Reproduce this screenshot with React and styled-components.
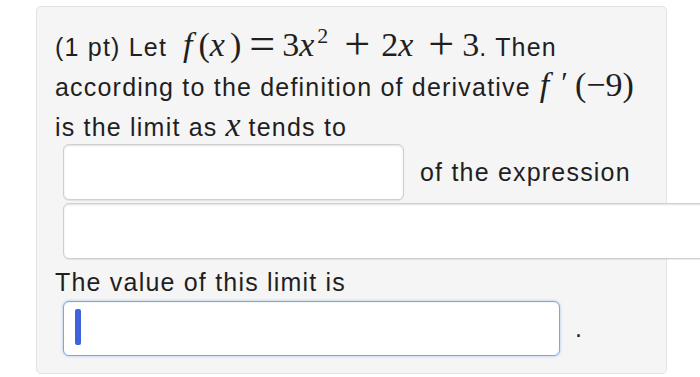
import React from 'react';
import styled, { createGlobalStyle } from 'styled-components';

const GlobalStyle = createGlobalStyle`
  html, body {
    margin: 0;
    padding: 0;
    background: #fff;
    overflow: hidden;
  }
  body {
    font-family: "Liberation Sans", Arial, sans-serif;
    color: #1f1f1f;
  }
`;

const Page = styled.div`
  width: 700px;
  height: 377px;
  padding: 6px 0 0 36px;
  box-sizing: border-box;
`;

const Card = styled.div`
  width: 631px;
  height: 368px;
  box-sizing: border-box;
  background: #f5f5f5;
  border: 1px solid #e2e2e2;
  border-radius: 5px;
  padding: 20px 0 0 18px;
  font-size: 25px;
  letter-spacing: 1.2px;
`;

const Line = styled.div`
  height: 40px;
  line-height: 40px;
  white-space: nowrap;
`;

const Math = styled.span`
  font-family: "Liberation Serif", "Times New Roman", serif;
  font-size: 34px;
  line-height: 0;
  letter-spacing: 0;
  margin-left: ${p => p.$before || 0}px;
  margin-right: ${p => p.$after || 0}px;
`;

const Var = styled.span`
  font-style: italic;
  margin-right: ${p => p.$kern ?? 2}px;
`;

/* relation / binary operators are drawn larger, like TeX's wide = and + */
const Op = styled.span`
  font-size: 46px;
  vertical-align: -3px;
  margin-left: ${p => p.$l ?? 8}px;
  margin-right: ${p => p.$r ?? 8}px;
`;

const Paren = styled.span`
  margin-left: ${p => p.$l || 0}px;
`;

const Sup = styled.span`
  font-size: ${p => p.$size || 22}px;
  vertical-align: ${p => p.$raise || 13}px;
  margin-left: ${p => p.$left || 1}px;
`;

const Row = styled.div`
  display: flex;
  align-items: center;
  margin-left: 8px;
  margin-top: ${p => p.$top || 0}px;
`;

const Field = styled.div`
  flex: none;
  width: ${p => p.$w}px;
  height: ${p => p.$h || 56}px;
  box-sizing: border-box;
  background: #fff;
  border: 1px solid ${p => (p.$focus ? '#79aade' : '#cfcfcf')};
  border-radius: 6px;
  box-shadow: ${p =>
    p.$focus
      ? '0 0 3px rgba(102,160,225,0.6), inset 0 1px 1px rgba(0,0,0,0.05)'
      : 'inset 0 1px 2px rgba(0,0,0,0.12), 0 1px 1px rgba(0,0,0,0.08)'};
  position: relative;
`;

const Caret = styled.span`
  position: absolute;
  left: 11px;
  top: 7px;
  width: 6px;
  height: 36px;
  border-radius: 2px;
  background: #3e63dd;
`;

const Label = styled.span`
  margin-left: ${p => p.$gap || 0}px;
`;

const Caption = styled.div`
  margin-top: 6px;
  height: 34px;
  line-height: 34px;
`;

export default function App() {
  return (
    <>
      <GlobalStyle />
      <Page>
        <Card>
          <Line>
            (1 pt) Let
            <Math $before={16}>
              <Var $kern={6}>f</Var>(<Var $kern={5}>x</Var>)
              <Op $l={8} $r={7}>=</Op>3<Var $kern={0}>x</Var>
              <Sup $left={3}>2</Sup>
              <Op $l={16} $r={11}>+</Op>2<Var $kern={5}>x</Var>
              <Op $l={10} $r={8}>+</Op>3
            </Math>
            . Then
          </Line>
          <Line>
            according to the definition of derivative
            <Math $before={9}>
              <Var $kern={0}>f</Var>
              <Sup $left={12} $size={30} $raise={4}>′</Sup>
              <Paren $l={7}>(</Paren>−9)
            </Math>
          </Line>
          <Line>
            is the limit as
            <Math $before={8} $after={8}>
              <Var $kern={0}>x</Var>
            </Math>
            tends to
          </Line>
          <Row $top={-3}>
            <Field $w={341} />
            <Label $gap={16}>of the expression</Label>
          </Row>
          <Row $top={3}>
            <Field $w={650} />
          </Row>
          <Caption>The value of this limit is</Caption>
          <Row $top={2}>
            <Field $w={497} $h={55} $focus>
              <Caret />
            </Field>
            <Label $gap={15}>.</Label>
          </Row>
        </Card>
      </Page>
    </>
  );
}
